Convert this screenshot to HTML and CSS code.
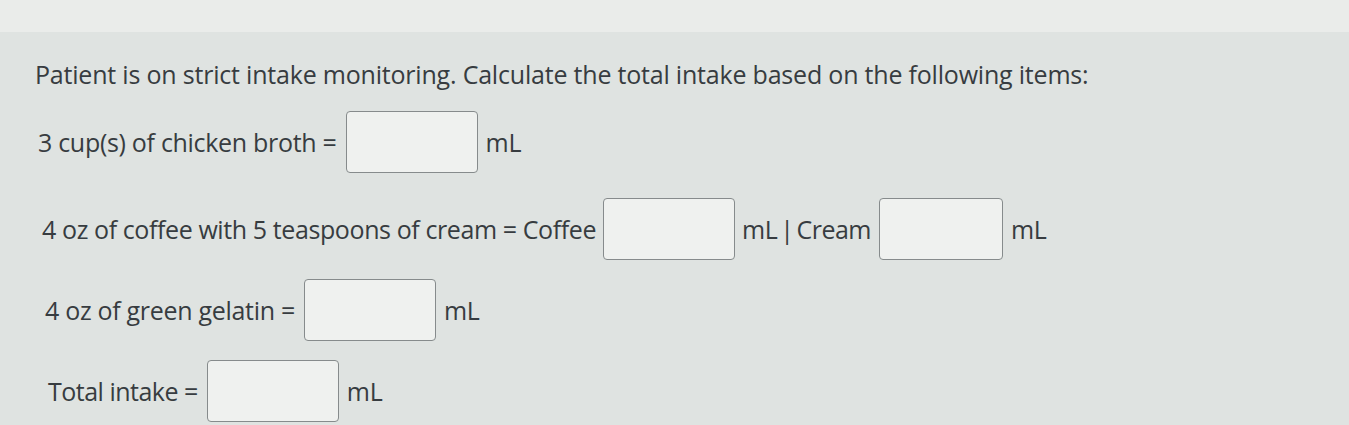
FILE: index.html
```html
<!DOCTYPE html>
<html>
<head>
<meta charset="utf-8">
<link rel="stylesheet" href="styles.css">
</head>
<body>
<div class="topstrip"></div>
<main class="panel">
  <p class="question">Patient is on strict intake monitoring. Calculate the total intake based on the following items:</p>
  <div class="rows">
    <div class="row r1">
      <span class="label">3 cup(s) of chicken broth =</span>
      <input class="box" type="text">
      <span class="unit">mL</span>
    </div>
    <div class="row r2">
      <span class="label">4 oz of coffee with 5 teaspoons of cream = Coffee</span>
      <input class="box" type="text">
      <span class="unit tight">mL | Cream</span>
      <input class="box narrow" type="text">
      <span class="unit">mL</span>
    </div>
    <div class="row r3">
      <span class="label">4 oz of green gelatin =</span>
      <input class="box" type="text">
      <span class="unit">mL</span>
    </div>
    <div class="row r4">
      <span class="label">Total intake =</span>
      <input class="box" type="text">
      <span class="unit">mL</span>
    </div>
  </div>
</main>
</body>
</html>
```

FILE: styles.css
```css
html, body {
  margin: 0;
  padding: 0;
}
body {
  width: 1349px;
  height: 425px;
  overflow: hidden;
  background: #dfe3e1;
  font-family: "Open Sans", "Liberation Sans", sans-serif;
  color: #373c40;
}
.topstrip {
  height: 32px;
  background: #eaecea;
}
.panel {
  padding: 24px 0 0 0;
}
.question {
  margin: 0 0 0 35px;
  font-size: 25px;
  line-height: 36px;
  letter-spacing: -0.2px;
}
.rows {
  margin-top: 19px;
  display: flex;
  flex-direction: column;
  gap: 19px;
}
.row {
  display: flex;
  align-items: center;
  height: 62px;
  font-size: 25px;
  letter-spacing: -0.3px;
}
.r1 { padding-left: 38px; margin-bottom: 6px; }
.r2 { padding-left: 42px; }
.r2 .label { letter-spacing: -0.4px; margin-right: 7px; }
.r3 { padding-left: 45px; }
.r4 { padding-left: 48px; }
.r4 .label { letter-spacing: -0.5px; }
.label {
  margin-right: 9px;
}
.box {
  box-sizing: border-box;
  width: 132px;
  height: 62px;
  margin: 0;
  border: 1.5px solid #868b8c;
  border-radius: 4px;
  background: #eff1ef;
  font: inherit;
}
.box.narrow {
  width: 124px;
}
.unit {
  margin: 0 8px 0 8px;
}
.unit.tight {
  letter-spacing: -0.5px;
  word-spacing: -3px;
  margin: 0 8px 0 7px;
}
```
